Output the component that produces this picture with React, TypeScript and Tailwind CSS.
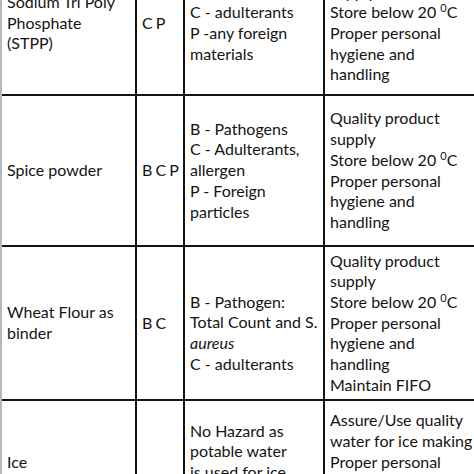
import React from 'react';

const Deg = () => (
  <>
    20 <sup className="text-[11px] -top-[6px]">0</sup>C
  </>
);

const Cell: React.FC<{ children?: React.ReactNode; className?: string }> = ({ children, className = '' }) => (
  <div className={`bg-white flex flex-col justify-center pl-[5px] whitespace-nowrap overflow-hidden ${className}`}>{children}</div>
);

const App: React.FC = () => {
  return (
    <div className="w-[474px] h-[474px] overflow-hidden bg-white">
      <div
        className="mt-[-48px] border-l-2 border-[#b8b8b8] grid grid-cols-[133px_46px_138px_170px] grid-rows-[142px_149px_152px_122px] gap-[2px] bg-[#151515] text-[#141414] text-[16px] leading-[20.7px]"
        style={{ fontFamily: 'Lato, sans-serif' }}
      >
        {/* STPP */}
        <Cell>
          <span>Sodium Tri Poly</span>
          <span>Phosphate</span>
          <span>(STPP)</span>
        </Cell>
        <Cell className="[word-spacing:-1px]">C P</Cell>
        <Cell>
          <span>No Hazard</span>
          <span>C - adulterants</span>
          <span>P -any foreign</span>
          <span>materials</span>
        </Cell>
        <Cell>
          <span>Quality product</span>
          <span>supply</span>
          <span>Store below <Deg /></span>
          <span>Proper personal</span>
          <span>hygiene and</span>
          <span>handling</span>
        </Cell>

        {/* Spice */}
        <Cell>Spice powder</Cell>
        <Cell className="[word-spacing:-1px]">B C P</Cell>
        <Cell>
          <span>B - Pathogens</span>
          <span>C - Adulterants,</span>
          <span>allergen</span>
          <span>P - Foreign</span>
          <span>particles</span>
        </Cell>
        <Cell>
          <span>Quality product</span>
          <span>supply</span>
          <span>Store below <Deg /></span>
          <span>Proper personal</span>
          <span>hygiene and</span>
          <span>handling</span>
        </Cell>

        {/* Wheat flour */}
        <Cell>
          <span>Wheat Flour as</span>
          <span>binder</span>
        </Cell>
        <Cell className="[word-spacing:-1px]">B C</Cell>
        <Cell className="pt-[20px]">
          <span>B - Pathogen:</span>
          <span>Total Count and S.</span>
          <span className="italic">aureus</span>
          <span>C - adulterants</span>
        </Cell>
        <Cell>
          <span>Quality product</span>
          <span>supply</span>
          <span>Store below <Deg /></span>
          <span>Proper personal</span>
          <span>hygiene and</span>
          <span>handling</span>
          <span>Maintain FIFO</span>
        </Cell>

        {/* Ice */}
        <Cell>Ice</Cell>
        <Cell></Cell>
        <Cell>
          <span>No Hazard as</span>
          <span>potable water</span>
          <span>is used for ice</span>
          <span>making</span>
        </Cell>
        <Cell>
          <span>Assure/Use quality</span>
          <span>water for ice making</span>
          <span>Proper personal</span>
          <span>hygiene and</span>
          <span>handling</span>
        </Cell>
      </div>
    </div>
  );
};

export default App;
